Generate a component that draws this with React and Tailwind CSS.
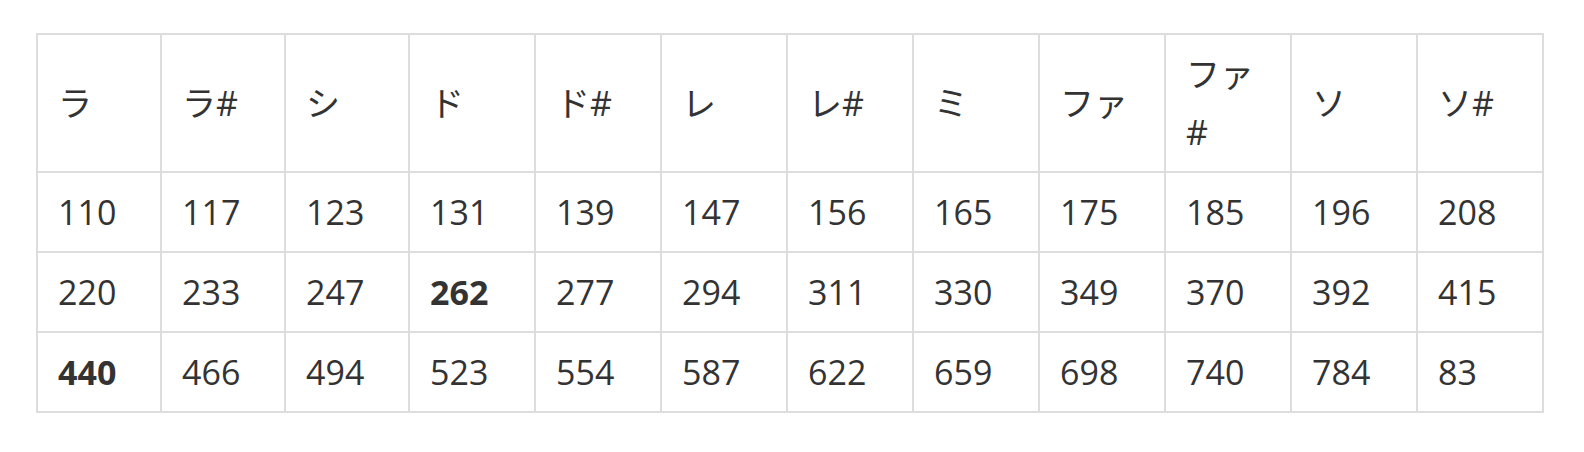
import React from "react";

const notes = ["ラ", "ラ#", "シ", "ド", "ド#", "レ", "レ#", "ミ", "ファ", "ファ#", "ソ", "ソ#"];

const rows = [
  ["110", "117", "123", "131", "139", "147", "156", "165", "175", "185", "196", "208"],
  ["220", "233", "247", "262", "277", "294", "311", "330", "349", "370", "392", "415"],
  ["440", "466", "494", "523", "554", "587", "622", "659", "698", "740", "784", "83"],
];

// frequencies shown in bold
const strong = ["262", "440"];

const App = () => {
  return (
    <div className="min-h-screen bg-white pt-[33px] pl-[36px] pr-[40px] font-['Open_Sans','Noto_Sans_CJK_JP',sans-serif] text-[#333]">
      <table className="w-full table-fixed border-collapse border-2 border-[#ddd] text-[34px] leading-[58px]">
        <colgroup>
          {notes.map((note, i) => (
            <col key={note} className={i < 3 ? "w-[124px]" : "w-[126px]"} />
          ))}
        </colgroup>
        <thead>
          <tr>
            {notes.map((note) => (
              <th
                key={note}
                className="border-2 border-[#ddd] px-[20px] py-[10px] text-left align-middle font-normal"
              >
                {note}
              </th>
            ))}
          </tr>
        </thead>
        <tbody>
          {rows.map((row, i) => (
            <tr key={i}>
              {row.map((value, j) => (
                <td
                  key={j}
                  className={
                    "border-2 border-[#ddd] px-[20px] py-[10px] align-middle" +
                    (strong.includes(value) ? " font-bold" : "")
                  }
                >
                  {value}
                </td>
              ))}
            </tr>
          ))}
        </tbody>
      </table>
    </div>
  );
};

export default App;
